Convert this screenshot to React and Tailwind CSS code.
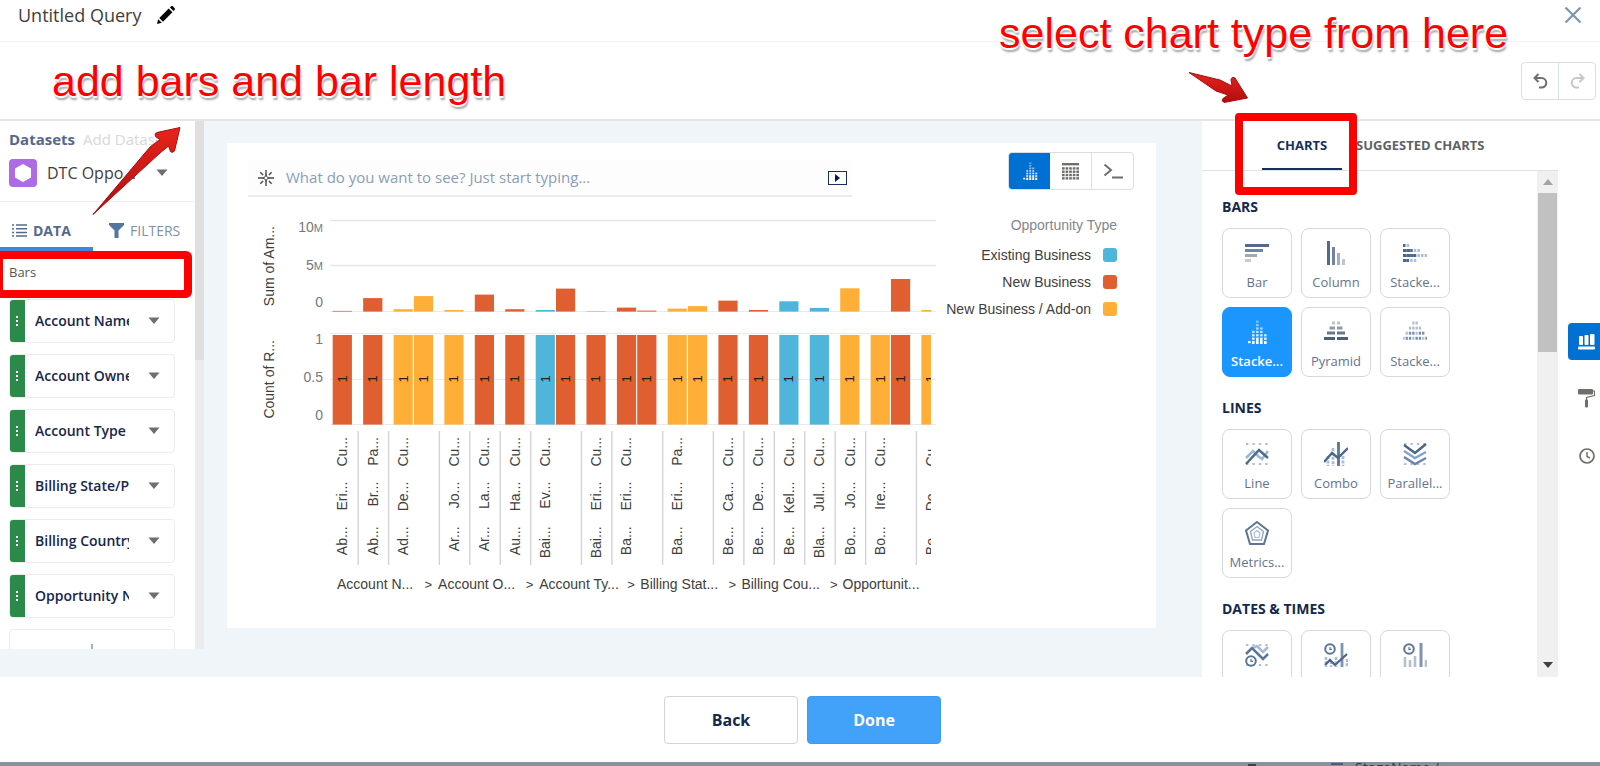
import { useState } from 'react'

const barFields = ['Account Name', 'Account Owner', 'Account Type', 'Billing State/Province', 'Billing Country', 'Opportunity Name']

const BLUE = '#4fb5da'
const RED = '#df5f30'
const AMBER = '#ffaf38'

const legend = [
  { label: 'Existing Business', swatch: 'bg-[#4fb5da]' },
  { label: 'New Business', swatch: 'bg-[#df5f30]' },
  { label: 'New Business / Add-on', swatch: 'bg-[#ffaf38]' },
]

// one group per account; each bar is [color, height of the amount bar]
const groups = [
  { labels: ['Cu...', 'Eri...', 'Ab...'], bars: [[RED, 0.7]] },
  { labels: ['Pa...', 'Br...', 'Ab...'], bars: [[RED, 13.5]] },
  { labels: ['Cu...', 'De...', 'Ad...'], bars: [[AMBER, 2.4], [AMBER, 15.5]] },
  { labels: ['Cu...', 'Jo...', 'Ar...'], bars: [[AMBER, 1.6]] },
  { labels: ['Cu...', 'La...', 'Ar...'], bars: [[RED, 17]] },
  { labels: ['Cu...', 'Ha...', 'Au...'], bars: [[RED, 2.4]] },
  { labels: ['Cu...', 'Ev...', 'Bai...'], bars: [[BLUE, 1.6], [RED, 23]] },
  { labels: ['Cu...', 'Eri...', 'Bai...'], bars: [[RED, 0.3]] },
  { labels: ['Cu...', 'Eri...', 'Ba...'], bars: [[RED, 4], [RED, 1]] },
  { labels: ['Pa...', 'Eri...', 'Ba...'], bars: [[AMBER, 3], [AMBER, 5.5]] },
  { labels: ['Cu...', 'Ca...', 'Be...'], bars: [[RED, 11]] },
  { labels: ['Cu...', 'De...', 'Be...'], bars: [[RED, 1.6]] },
  { labels: ['Cu...', 'Kel...', 'Be...'], bars: [[BLUE, 10.3]] },
  { labels: ['Cu...', 'Jul...', 'Bla...'], bars: [[BLUE, 3.7]] },
  { labels: ['Cu...', 'Jo...', 'Bo...'], bars: [[AMBER, 23.3]] },
  { labels: ['Cu...', 'Ire...', 'Bo...'], bars: [[AMBER, 0], [RED, 32.6]] },
  { labels: ['Cu...', 'De...', 'Be...'], bars: [[AMBER, 1.6]] },
]

const crumbs = ['Account N...', 'Account O...', 'Account Ty...', 'Billing Stat...', 'Billing Cou...', 'Opportunit...']

const ticks = [
  { value: '10', unit: 'M', y: 35 },
  { value: '5', unit: 'M', y: 73 },
  { value: '0', y: 110 },
  { value: '1', y: 147 },
  { value: '0.5', y: 185 },
  { value: '0', y: 223 },
]

function Chart() {
  const slot = 20.3
  const gap = 10.15
  let cursor = 84.7
  const placed = groups.map((g) => {
    const x = cursor
    cursor += g.bars.length * slot + gap
    return { ...g, x }
  })

  return (
    <svg width="692" height="404" viewBox="0 0 692 404" fontFamily="'Liberation Sans', Arial, sans-serif" fontSize="14" className="block shrink-0">
      <defs>
        <clipPath id="plot">
          <rect x="80" y="0" width="603" height="404" />
        </clipPath>
      </defs>
      {[23.5, 68.5, 114.5, 136.5, 182.5, 227.5].map((y, i) => (
        <line key={y} x1="82" x2="688" y1={y} y2={y} stroke={i < 2 ? '#e6e6e6' : '#e9eaec'} strokeWidth={i < 2 ? 1.6 : 1} />
      ))}
      <text transform="translate(26 29) rotate(-90)" textAnchor="end" fill="#3e3e3c">Sum of Am...</text>
      <text transform="translate(26 143) rotate(-90)" textAnchor="end" fill="#3e3e3c">Count of R...</text>
      {ticks.map((t) => (
        <text key={t.y} x="75" y={t.y} textAnchor="end" fill="#76787c">
          {t.value}
          {t.unit && <tspan fontSize="11">{t.unit}</tspan>}
        </text>
      ))}
      <g clipPath="url(#plot)">
        {placed.map((g, gi) => (
          <g key={gi}>
            {gi > 0 && <line x1={g.x - 5} x2={g.x - 5} y1="234" y2="368" stroke="#d2d4d6" strokeWidth="1.4" />}
            {g.bars.map(([color, h], bi) => {
              const x = g.x + bi * slot
              return (
                <g key={bi}>
                  <rect x={x} y={114.6 - h} width="19.2" height={h} fill={color} />
                  <rect x={x} y="138" width="19.2" height="89.6" fill={color} />
                  <text transform={`translate(${x + 14} 182) rotate(-90)`} textAnchor="middle" fill="#2b1a10" fontSize="13">1</text>
                </g>
              )
            })}
            {g.labels.map((label, li) => (
              <text key={li} transform={`translate(${g.x + 14.5} ${240 + li * 44.7}) rotate(-90)`} textAnchor="end" fill="#3e3e3c">
                {label}
              </text>
            ))}
          </g>
        ))}
      </g>
      {crumbs.map((c, i) => (
        <g key={c} fill="#3e3e3c">
          {i > 0 && <text x={75 + i * 101.4} y="392" fontSize="13">&gt;</text>}
          <text x={89 + i * 101.1} y="392">{c}</text>
        </g>
      ))}
    </svg>
  )
}

// columns of small squares on solid feet, tallest in the middle
function DotColumns() {
  return [
    [0, 1],
    [1, 4],
    [2, 7],
    [2, 5],
    [1, 3],
  ].map(([solid, n], c) =>
    Array.from({ length: n }, (_, r) => (
      <rect
        key={`${c}-${r}`}
        x={3 + c * 4}
        y={21 - r * 3.4}
        width="2.6"
        height={r < solid ? 3.4 : 2.2}
        opacity={Math.max(0.4, 1 - r * 0.1)}
        fill="currentColor"
      />
    )),
  )
}

function DotGrid() {
  return [0, 1, 2, 3].map((i) => (
    <g key={i} fill="#b4bdca" stroke="none">
      <rect x={1 + i * 6.4} y="1" width="2.4" height="2" />
      <rect x={1 + i * 6.4} y="21" width="2.4" height="2" />
    </g>
  ))
}

function MiniClock({ cx, cy }) {
  return (
    <g stroke="#5c7594" fill="#fff">
      <circle cx={cx} cy={cy} r="4.8" strokeWidth="2" />
      <path d={`M${cx} ${cy - 2}v2.3h2`} strokeWidth="1.2" fill="none" />
    </g>
  )
}

const icons = {
  bar: (
    <g>
      <rect x="0" y="3" width="24" height="3" fill="#55698a" />
      <rect x="0" y="8" width="18" height="3" fill="#7085a3" />
      <rect x="0" y="13" width="12" height="3" fill="#a0a9b8" />
      <rect x="0" y="18" width="6" height="3" fill="#c6cbd3" />
    </g>
  ),
  column: (
    <g>
      <rect x="3" y="0" width="3" height="24" fill="#55698a" />
      <rect x="8" y="6" width="3" height="18" fill="#7085a3" />
      <rect x="13" y="12" width="3" height="12" fill="#9fb0c6" />
      <rect x="18" y="18" width="3" height="6" fill="#bcc5d1" />
    </g>
  ),
  stackedBar: (
    <g>
      {[[3, 1, 2], [8, 3, 5], [13, 4, 7], [18, 2, 4]].map(([y, dark, total]) =>
        Array.from({ length: total }, (_, i) => (
          <rect key={`${y}-${i}`} x={i * 3.6} y={y} width={i < dark - 1 ? 3.6 : 2.5} height="3" fill={i < dark ? '#4a678c' : '#a9c0da'} />
        )),
      )}
    </g>
  ),
  stackedColumn: <DotColumns />,
  pyramid: (
    <g>
      {[[8, 1.5, 3, '#bcc2cc'], [5.5, 6.5, 5.5, '#9097a5'], [3, 11.5, 8, '#6b7688'], [0, 17, 11, '#4d5e78']].map(([x, y, w, f]) => (
        <g key={y} fill={f}>
          <rect x={x} y={y} width={w} height="3" />
          <rect x={24 - x - w} y={y} width={w} height="3" />
        </g>
      ))}
    </g>
  ),
  stackedPyramid: (
    <g>
      {[2, 4, 6, 8].map((n, r) =>
        Array.from({ length: n }, (_, i) => (
          <rect key={`${r}-${i}`} x={12.5 - (n * 3.3) / 2 + i * 3.3} y={1.5 + r * 5.1} width="2.3" height="3" fill={r < 2 ? '#b3bcc9' : i % 3 === 0 ? '#a9c4df' : '#7a8da7'} />
        )),
      )}
    </g>
  ),
  line: (
    <g fill="none" strokeWidth="2.5">
      <DotGrid />
      <path d="M1 16 8 9l5 5 4 3 6-8" stroke="#9db8d4" />
      <path d="M1 22 14 8l9 8" stroke="#506a8c" />
    </g>
  ),
  combo: (
    <g fill="none">
      {[[4, 14], [9, 6], [19, 14]].map(([x, y]) => (
        <path key={x} d={`M${x} ${y}V24`} stroke="#a9bdd4" strokeWidth="2.8" strokeDasharray="3 1.4" />
      ))}
      <path d="M14.5 0V24" stroke="#5c7594" strokeWidth="2.8" />
      <path d="M0 20 8 11l6 5L24 6" stroke="#4a678c" strokeWidth="2.4" />
    </g>
  ),
  parallel: (
    <g fill="none" strokeWidth="2.4">
      <DotGrid />
      <path d="M1 3l11 8L23 2" stroke="#4a6486" />
      <path d="M1 9l11 7L23 10" stroke="#86a4c4" />
      <path d="M1 15l11 7L23 16" stroke="#6a86a8" />
    </g>
  ),
  metrics: (
    <g fill="none">
      <path d="M12 1 23 9.5 19 23H5L1 9.5Z" stroke="#5c7594" strokeWidth="2" />
      <path d="M12 5.5 18.5 10.5 16.5 19H7.5L5.5 10.5Z" stroke="#8fa5c0" strokeWidth="1.3" />
      <path d="M12 9.5 15 12 14 16.5H10L9 12Z" stroke="#a9bdd4" strokeWidth="1.2" />
    </g>
  ),
  timeLine: (
    <g fill="none" strokeWidth="2.5">
      <DotGrid />
      <path d="M8 5 12 3l6 6 5-5" stroke="#a3bad3" />
      <path d="M1 11 7 5l11 11 5-5" stroke="#5c7594" />
      <MiniClock cx={6} cy={18} />
    </g>
  ),
  timeCombo: (
    <g fill="none">
      <path d="M18 0V24" stroke="#7d95b2" strokeWidth="2.8" />
      <path d="M2 14V24M7 18V24M12 14V24M23 16V24" stroke="#a9bdd4" strokeWidth="2.6" strokeDasharray="3 1.3" />
      <path d="M1 22 6 17l5 5L23 11" stroke="#4a678c" strokeWidth="2.3" />
      <MiniClock cx={6} cy={6} />
    </g>
  ),
  timeBar: (
    <g fill="none">
      <path d="M18 0V24" stroke="#7d95b2" strokeWidth="3" />
      <path d="M2 14V24M7 17V24M12 13V24M23 17V24" stroke="#b6bfcc" strokeWidth="2.6" />
      <MiniClock cx={6} cy={6} />
    </g>
  ),
}

const sections = [
  {
    title: 'BARS',
    items: [
      { id: 'bar', label: 'Bar' },
      { id: 'column', label: 'Column' },
      { id: 'stackedBar', label: 'Stacke...' },
      { id: 'stackedColumn', label: 'Stacke...' },
      { id: 'pyramid', label: 'Pyramid' },
      { id: 'stackedPyramid', label: 'Stacke...' },
    ],
  },
  {
    title: 'LINES',
    items: [
      { id: 'line', label: 'Line' },
      { id: 'combo', label: 'Combo' },
      { id: 'parallel', label: 'Parallel...' },
      { id: 'metrics', label: 'Metrics...' },
    ],
  },
  {
    title: 'DATES & TIMES',
    items: [{ id: 'timeLine' }, { id: 'timeCombo' }, { id: 'timeBar' }],
  },
]

function Caret() {
  return (
    <svg width="12" height="8" viewBox="0 0 12 8" aria-hidden="true">
      <path d="M0.500 0.500h11L6 7z" fill="#706e6b" />
    </svg>
  )
}

function FieldPill({ name }) {
  return (
    <div className="flex h-11 items-stretch overflow-hidden rounded border border-[#ececec] bg-white">
      <span className="-my-px -ml-px flex w-4 shrink-0 flex-col items-center justify-center gap-0.5 bg-[#2b8a49]">
        <i className="size-0.5 bg-white" />
        <i className="size-0.5 bg-white" />
        <i className="size-0.5 bg-white" />
      </span>
      <span className="ml-2.5 w-[94px] self-center overflow-hidden text-sm font-semibold whitespace-nowrap text-[#16264c]">{name}</span>
      <button aria-label={`${name} options`} className="ml-[19px] cursor-pointer">
        <Caret />
      </button>
    </div>
  )
}

function LeftPanel() {
  return (
    <aside className="relative mb-7 flex w-[204px] shrink-0 bg-white">
      <div className="min-w-0 flex-1 overflow-hidden">
        <div className="flex items-center gap-2 pt-2 pl-[9px] text-[15px] leading-5 whitespace-nowrap">
          <h2 className="font-bold text-[#54698d]">Datasets</h2>
          <a href="#add" className="text-[#d8d8d8]">Add Dataset</a>
        </div>
        <div className="mt-2.5 flex h-7 items-center pl-[9px]">
          <span className="flex size-7 items-center justify-center rounded bg-[#ae6be3]">
            <svg width="18" height="20" viewBox="0 0 18 20" aria-hidden="true">
              <path d="M9 1l8 4.500v9L9 19l-8-4.500v-9z" fill="#fff" />
            </svg>
          </span>
          <span className="ml-2.5 w-[109px] text-base text-[#3e3e3c]">DTC Oppo...</span>
          <button aria-label="Change dataset" className="cursor-pointer">
            <Caret />
          </button>
        </div>
        <div className="mt-3.5 border-t border-[#ececec]" />
        <div className="flex h-[49px] text-sm text-[#54698d]">
          <button className="flex w-[93px] cursor-pointer items-center gap-1.5 border-b-4 border-[#3f87dd] pt-3 pl-3 font-bold">
            <svg width="15" height="13" viewBox="0 0 15 13" aria-hidden="true" stroke="#54698d" strokeWidth="1.500">
              <path d="M0 1h2M4 1h11M0 4.700h2M4 4.700h11M0 8.400h2M4 8.400h11M0 12.100h2M4 12.100h11" />
            </svg>
            DATA
          </button>
          <button className="flex cursor-pointer items-center gap-1.5 pt-2 pl-4 text-[#8090a8]">
            <svg width="15" height="15" viewBox="0 0 15 15" aria-hidden="true">
              <path d="M0 0h15v2L9.500 7.500V15h-4V7.500L0 2z" fill="#54759e" />
            </svg>
            FILTERS
          </button>
        </div>
        <h3 className="pt-[11px] pl-[9px] text-[13px] leading-5 text-[#54565a]">Bars</h3>
        <div className="mt-[17px] mr-5 ml-[9px] flex flex-col gap-[11px]">
          {barFields.map((f) => (
            <FieldPill key={f} name={f} />
          ))}
          <button aria-label="Add bar" className="flex h-11 cursor-pointer justify-center rounded border border-[#ececec] pt-3.5">
            <svg width="14" height="14" viewBox="0 0 14 14" stroke="#8a9ab3" strokeWidth="1.500" aria-hidden="true">
              <path d="M7 0v14M0 7h14" />
            </svg>
          </button>
        </div>
      </div>
      <div className="w-[9px] shrink-0 bg-[#ececee]">
        <div className="h-[239px] bg-[#dfdfdf]" />
      </div>
      <div className="pointer-events-none absolute top-[130px] -left-[5px] h-[47px] w-[197px] rounded-md border-8 border-[#fd0000]" />
    </aside>
  )
}

function ViewToggle() {
  return (
    <div className="flex h-[38px] w-[126px] overflow-hidden rounded border border-[#d8dde6]">
      <button aria-label="Chart mode" className="flex flex-1 cursor-pointer items-center justify-center bg-[#0070d2] text-white">
        <svg width="18" height="18" viewBox="0 0 24 24" aria-hidden="true">
          <DotColumns />
        </svg>
      </button>
      <button aria-label="Table mode" className="flex flex-1 cursor-pointer items-center justify-center border-r border-[#d8dde6]">
        <svg width="17" height="17" viewBox="0 0 18 18" fill="#706e6b" aria-hidden="true">
          <rect width="18" height="2.500" />
          {[4.5, 8, 11.5, 15].map((y) => [0, 3.8, 7.6, 11.4, 15.2].map((x) => <rect key={`${x}-${y}`} x={x} y={y} width="2.800" height="2.500" />))}
        </svg>
      </button>
      <button aria-label="Query mode" className="flex flex-1 cursor-pointer items-center justify-center">
        <svg width="20" height="16" viewBox="0 0 20 16" fill="none" stroke="#706e6b" strokeWidth="2" aria-hidden="true">
          <path d="M1.500 1.500 8 7l-6.500 5.500M9 14.500h11" />
        </svg>
      </button>
    </div>
  )
}

function Explorer() {
  return (
    <section className="mt-[22px] mr-[46px] mb-[49px] ml-[23px] flex min-w-0 flex-1 flex-col bg-white">
      <div className="flex items-start justify-between pt-[9px] pr-[22px] pl-[21px]">
        <div className="mt-2 flex h-[37px] w-[604px] items-center border-b-2 border-[#ececec] bg-[#fdfdfd] pr-[5px] pl-[10px]">
          <svg width="16" height="16" viewBox="0 0 16 16" stroke="#4a4a4a" strokeWidth="1.400" fill="none" aria-hidden="true">
            <path d="M8 0v5M8 11v5M0 8h5M11 8h5M2.300 2.300l2.800 2.800M10.900 10.900l2.800 2.800M13.700 2.300l-2.800 2.800M5.100 10.900l-2.800 2.800" />
            <path d="M8 4.500l1 2.500 2.500 1L9 9l-1 2.500L7 9 4.500 8 7 7z" strokeWidth="1" />
          </svg>
          <input
            aria-label="Ask a question"
            placeholder="What do you want to see? Just start typing..."
            className="ml-3 min-w-0 flex-1 bg-transparent text-[15px] outline-none placeholder:text-[#8a9db8]"
          />
          <button aria-label="Run" className="flex h-3.5 w-[19px] cursor-pointer items-center justify-center border border-[#16325c]">
            <svg width="5" height="8" viewBox="0 0 5 8" aria-hidden="true">
              <path d="M0 0l5 4-5 4z" fill="#061c3f" />
            </svg>
          </button>
        </div>
        <ViewToggle />
      </div>
      <div className="relative flex items-start pl-[21px]">
        <Chart />
        <div className="absolute top-[18px] right-[39px] flex flex-col items-end gap-[7px] font-['Liberation_Sans',Arial,sans-serif] text-sm leading-5 text-[#3e3e3c]">
          <p className="mb-[3px] text-[#85878a]">Opportunity Type</p>
          {legend.map((l) => (
            <div key={l.label} className="flex items-center gap-3">
              {l.label}
              <span className={`size-3.5 rounded-[3px] ${l.swatch}`} />
            </div>
          ))}
        </div>
      </div>
    </section>
  )
}

function ChartTile({ id, label, active, onClick }) {
  return (
    <button
      onClick={onClick}
      aria-label={id}
      className={`flex size-[70px] cursor-pointer flex-col items-center rounded-lg border pt-3 ${
        active ? 'border-[#1b96ff] bg-[#1b96ff] font-semibold text-white' : 'border-[#d8d8d8] bg-white text-[#64748f]'
      }`}
    >
      <svg width="24" height="24" viewBox="0 0 24 24" className="shrink-0" aria-hidden="true">
        {icons[id]}
      </svg>
      {label && <span className="mt-[7px] text-[13px] leading-5">{label}</span>}
    </button>
  )
}

function ScrollBar() {
  return (
    <div className="flex w-[21px] shrink-0 flex-col items-center bg-[#f0f0f0]">
      <svg width="10" height="6" viewBox="0 0 10 6" className="mt-2 mb-2" aria-hidden="true">
        <path d="M0 6l5-6 5 6z" fill="#a3a3a3" />
      </svg>
      <div className="h-[159px] w-[19px] bg-[#c1c1c1]" />
      <svg width="10" height="6" viewBox="0 0 10 6" className="mt-auto mb-[9px]" aria-hidden="true">
        <path d="M0 0l5 6 5-6z" fill="#404040" />
      </svg>
    </div>
  )
}

function RightPanel() {
  const [active, setActive] = useState('stackedColumn')
  return (
    <section className="relative flex w-[398px] shrink-0 bg-white">
      <div className="flex w-[356px] shrink-0 flex-col overflow-hidden">
        <div className="flex h-[50px] shrink-0 border-b border-[#e2e2e2] pl-[60px] text-[13px] font-bold">
          <button className="w-20 cursor-pointer border-b-2 border-[#16325c] pt-0.5 text-[#16325c]">CHARTS</button>
          <button className="ml-3.5 cursor-pointer text-[#5f6165]">SUGGESTED CHARTS</button>
        </div>
        <div className="flex min-h-0 flex-1">
          <div className="min-w-0 flex-1 overflow-hidden pt-[26px] pl-5">
            {sections.map((s) => (
              <div key={s.title} className="mb-[21px]">
                <h3 className="text-sm leading-5 font-bold text-[#14284d]">{s.title}</h3>
                <div className="mt-[11px] grid w-[228px] grid-cols-3 gap-[9px]">
                  {s.items.map((item) => (
                    <ChartTile key={item.id} {...item} active={active === item.id} onClick={() => setActive(item.id)} />
                  ))}
                </div>
              </div>
            ))}
          </div>
          <ScrollBar />
        </div>
      </div>
      <nav className="flex flex-1 flex-col items-end pt-[202px]">
        <button aria-label="Chart types" className="flex h-[37px] w-8 cursor-pointer items-center justify-center rounded-l bg-[#0070d2] pl-1">
          <svg width="17" height="16" viewBox="0 0 17 16" fill="#fff" aria-hidden="true">
            <rect x="1" y="2" width="4" height="9" rx="1" />
            <rect x="6.500" y="1" width="4" height="10" rx="1" />
            <rect x="12" y="0" width="4.500" height="11" rx="1" />
            <rect x="0" y="12.500" width="17" height="3" rx="1" />
          </svg>
        </button>
        <button aria-label="Formatting" className="mt-7 mr-[5px] cursor-pointer">
          <svg width="17" height="20" viewBox="0 0 17 20" aria-hidden="true">
            <rect x="0" y="1" width="15" height="5.500" rx="1" fill="#706e6b" />
            <path d="M15 3h1.500v4.500L8.500 9.500V12" fill="none" stroke="#706e6b" strokeWidth="1.200" />
            <rect x="7" y="11.500" width="3" height="8" rx="1" fill="#706e6b" />
          </svg>
        </button>
        <button aria-label="History" className="mt-10 mr-[5px] cursor-pointer">
          <svg width="16" height="16" viewBox="0 0 16 16" fill="none" stroke="#706e6b" strokeWidth="1.700" aria-hidden="true">
            <circle cx="8" cy="8" r="7" />
            <path d="M8 4v4.500l3 1.500" strokeWidth="1.400" />
          </svg>
        </button>
      </nav>
      <div className="pointer-events-none absolute -top-2 left-[33px] h-[82px] w-[122px] rounded border-8 border-[#fd0000]" />
    </section>
  )
}

function Note({ className, children }) {
  return (
    <p
      className={`pointer-events-none absolute font-['Liberation_Sans',Arial,sans-serif] text-[43px] leading-12 whitespace-nowrap text-[#fd0000] [text-shadow:0_0_3px_#fff,0_2px_1px_#fff,1px_4px_2px_#a3a3a3] ${className}`}
    >
      {children}
    </p>
  )
}

export default function App() {
  return (
    <div className="relative flex h-screen flex-col overflow-hidden bg-white font-['Open_Sans','Noto_Sans',sans-serif] text-[#3e3e3c]">
      <header className="flex h-[42px] shrink-0 items-start justify-between border-b border-[#f1f1f1] pt-px pr-[18px] pl-[18px]">
        <div className="flex items-center gap-4">
          <h1 className="text-lg leading-7 text-[#3e3e3c]">Untitled Query</h1>
          <button aria-label="Rename" className="cursor-pointer">
            <svg width="18" height="18" viewBox="0 0 18 18" fill="#080707" aria-hidden="true">
              <path d="M0 18l1.200-4.800 3.600 3.600zM2.300 12 11.700 2.600l3.700 3.700L6 15.700zM12.900 1.500l1-1c.6-.6 1.500-.6 2.100 0l1.500 1.500c.6.6.6 1.500 0 2.100l-1 1z" />
            </svg>
          </button>
        </div>
        <button aria-label="Close" className="mt-1.5 cursor-pointer">
          <svg width="18" height="16" viewBox="0 0 18 16" stroke="#7e95ad" strokeWidth="2.200" aria-hidden="true">
            <path d="M1.500 0.500l15 15M16.500 0.500l-15 15" />
          </svg>
        </button>
      </header>

      <div className="flex h-[79px] shrink-0 items-center justify-end border-b-2 border-[#e3e5e8] pr-1">
        <div className="flex h-[38px] w-[75px] rounded border border-[#d8dde6]">
          <button aria-label="Undo" className="flex flex-1 cursor-pointer items-center justify-center border-r border-[#d8dde6] text-[#706e6b]">
            <svg width="15" height="16" viewBox="0 0 15 16" fill="none" stroke="currentColor" strokeWidth="2" aria-hidden="true">
              <path d="M5.500 1 1.500 5l4 4M2 5h6.500a4.800 4.800 0 0 1 0 9.600H6" />
            </svg>
          </button>
          <button aria-label="Redo" className="flex flex-1 cursor-pointer items-center justify-center text-[#c9c7c5]">
            <svg width="15" height="16" viewBox="0 0 15 16" fill="none" stroke="currentColor" strokeWidth="2" aria-hidden="true">
              <path d="M9.500 1l4 4-4 4M13 5H6.500a4.800 4.800 0 0 0 0 9.600H9" />
            </svg>
          </button>
        </div>
      </div>

      <main className="flex min-h-0 flex-1 bg-[#f0f5fa]">
        <LeftPanel />
        <Explorer />
        <RightPanel />
      </main>

      <footer className="flex h-[85px] shrink-0 items-center justify-center gap-[9px] pl-[5px] text-base font-bold">
        <button className="h-12 w-[134px] cursor-pointer rounded border border-[#d0d4dc] bg-white text-[#14284d]">Back</button>
        <button className="h-12 w-[134px] cursor-pointer rounded border border-[#3d9bf0] bg-[#42a1f8] text-white">Done</button>
      </footer>
      <div className="flex h-1 shrink-0 items-start overflow-hidden bg-[#87929f] pl-[1248px] text-sm leading-3 text-[#2b3a52]">
        <i className="mt-0.5 h-0.5 w-2 bg-[#3a4149]" />
        <i className="mt-px ml-[75px] h-0.5 w-3 bg-[#4d5a78]" />
        <span className="ml-3">StageName /</span>
      </div>

      <Note className="top-[57px] left-[52px]">add bars and bar length</Note>
      <Note className="top-[9px] left-[999px]">select chart type from here</Note>
      <svg className="pointer-events-none absolute top-0 left-0" width="1280" height="230" viewBox="0 0 1280 230" aria-hidden="true">
        <defs>
          <linearGradient id="arrow" x1="0" y1="0" x2="0" y2="1">
            <stop offset="0" stopColor="#e8241c" />
            <stop offset="1" stopColor="#b00d0d" />
          </linearGradient>
        </defs>
        <g fill="url(#arrow)" stroke="#a31010" strokeWidth="1" strokeLinejoin="round">
          <path d="M93 214.500 150 147 160 139.500 155.500 136.500Q154 133.500 157 132.500L180 127.500 174.500 151Q172.500 153.500 170.500 151.500L168.500 146 160 153Z" />
          <path d="M1189 72.500 1220 80 1232 86 1231 79.500Q1232 76 1235 78L1247.500 98 1224 102.500Q1221 101 1223 98.500L1228 95 1216 91Z" />
        </g>
      </svg>
    </div>
  )
}
